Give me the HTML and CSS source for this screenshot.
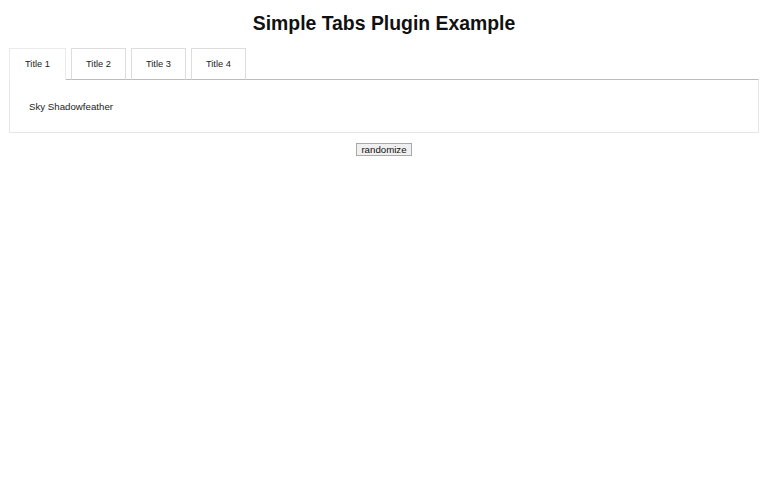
FILE: index.html
```html
<!DOCTYPE html>
<html>
<head>
<meta charset="utf-8">
<link rel="stylesheet" href="styles.css">
</head>
<body>
<h1 class="title">Simple Tabs Plugin Example</h1>
<div class="tabs">
  <div class="tab-list">
    <div class="tab active">Title 1</div>
    <div class="tab">Title 2</div>
    <div class="tab">Title 3</div>
    <div class="tab">Title 4</div>
  </div>
  <div class="panel">Sky Shadowfeather</div>
</div>
<div class="actions"><button class="btn">randomize</button></div>
</body>
</html>
```
FILE: styles.css
```css
html, body { margin: 0; padding: 0; background: #fff; }
body {
  font-family: "Liberation Sans", Arial, sans-serif;
  color: #111;
  padding: 0 9px;
}
.title {
  margin: 0;
  padding-top: 12px;
  font-size: 19.4px;
  line-height: 23px;
  font-weight: bold;
  text-align: center;
  color: #111;
}
.tabs { margin-top: 13px; }
.tab-list {
  display: flex;
  gap: 5px;
  align-items: flex-end;
}
.tab {
  font-size: 9.3px;
  line-height: 12px;
  height: 12px;
  padding: 9px 14px 9px 14px;
  border: 1px solid #ddd;
  border-bottom: 1px solid #bbb;
  color: #222;
  margin-bottom: -1px;
  background: #fff;
  position: relative;
}
.tab.active {
  border-color: #eaeaea;
  border-bottom: none;
  z-index: 1;
  padding: 9px 15px 10px;
}
.panel {
  border: 1px solid #e6e6e6;
  border-top: 1px solid #bbb;
  height: 52px;
  padding-left: 19px;
  display: flex;
  align-items: center;
  font-size: 9.7px;
  color: #222;
}
.actions { text-align: center; margin-top: 6px; }
.btn {
  font-family: "Liberation Sans", Arial, sans-serif;
  font-size: 9.7px;
  line-height: 11px;
  padding: 0 4px;
  border: 1px solid #aaa;
  background: #f0f0f0;
  color: #111;
  border-radius: 0;
}
```
